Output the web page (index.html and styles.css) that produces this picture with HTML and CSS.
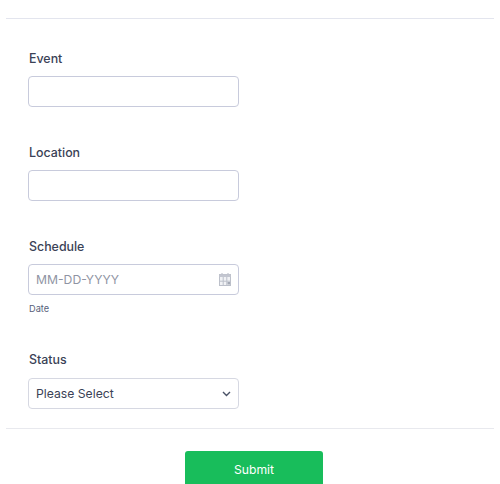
FILE: index.html
```html
<!DOCTYPE html>
<html lang="en">
  <head>
    <meta charset="UTF-8" />
    <title>Form</title>
    <link rel="stylesheet" href="styles.css">
  </head>
  <body>
    <form class="form">
      <ul class="form-list">
        <li class="field">
          <label class="field-label">Event</label>
          <div class="text-input"></div>
        </li>
        <li class="field">
          <label class="field-label">Location</label>
          <div class="text-input"></div>
        </li>
        <li class="field field-date">
          <label class="field-label">Schedule</label>
          <div class="text-input date-input">
            <span class="placeholder">MM-DD-YYYY</span>
            <svg class="calendar-icon" width="12" height="13" viewBox="0 0 12 13">
              <path d="M3 0v2M9 0v2" stroke="#b4b8c3" stroke-width="1" fill="none" />
              <rect x="0.5" y="1.5" width="11" height="11" fill="#f1f2f5" stroke="#bcc0ca" stroke-width="1" />
              <rect x="0.5" y="1.5" width="11" height="2.5" fill="#c3c6d0" />
              <path d="M0.5 8.2h11M4.2 4v8.5M7.8 4v8.5" stroke="#bcc0ca" stroke-width="1" fill="none" />
              <rect x="8.5" y="9" width="2.5" height="2.5" fill="#a4a9b5" />
            </svg>
          </div>
          <span class="sublabel">Date</span>
        </li>
        <li class="field field-status">
          <label class="field-label">Status</label>
          <div class="text-input select-input">
            <span>Please Select</span>
            <svg class="chevron-icon" width="9" height="6" viewBox="0 0 9 6">
              <path d="M1 1l3.5 3.5L8 1" stroke="#4a5266" stroke-width="1.4" fill="none" />
            </svg>
          </div>
        </li>
      </ul>
      <div class="form-actions">
        <button class="submit-btn" type="button">Submit</button>
      </div>
    </form>
  </body>
</html>
```

FILE: styles.css
```css
* {
  margin: 0;
  padding: 0;
  box-sizing: border-box;
}
html,
body {
  height: 484px;
  overflow: hidden;
}
body {
  font-family: Inter, "Liberation Sans", sans-serif;
  background-color: #fff;
  color: #2c3345;
}
.form {
  margin: 0 6px;
  padding-top: 18px;
}
.form-list {
  list-style: none;
  border-top: 1px solid #e3e5ee;
  border-bottom: 1px solid #e8e9ee;
  padding: 31px 22px 19px;
  display: flex;
  flex-direction: column;
  gap: 37px;
}
.field-label {
  display: block;
  font-size: 12.4px;
  line-height: 16px;
  font-weight: 500;
  color: #3a4256;
  padding-top: 1px;
  margin-bottom: 9px;
  padding-left: 1px;
  height: 17px;
}
.text-input {
  width: 211px;
  height: 31px;
  border: 1px solid #c8cbdc;
  border-radius: 4px;
  background: #fff;
  display: flex;
  align-items: center;
  justify-content: space-between;
  padding: 0 7px;
  font-size: 12.2px;
  color: #3a4256;
}
.date-input {
  padding-right: 7px;
}
.placeholder {
  color: #8f94a3;
}
.field-date {
  margin-bottom: -2px;
}
.field-status .field-label {
  margin-bottom: 10px;
}
.sublabel {
  display: block;
  margin-top: 7px;
  padding-left: 1px;
  font-size: 9.2px;
  line-height: 14px;
  color: #57607a;
}
.select-input {
  border-color: #d6d8e2;
  padding-right: 7px;
}
.form-actions {
  display: flex;
  justify-content: center;
  padding-top: 22px;
  padding-left: 8px;
}
.submit-btn {
  width: 138px;
  height: 40px;
  border: none;
  border-radius: 3px;
  background: #18bd5b;
  color: #fff;
  font-family: inherit;
  font-size: 12.2px;
  font-weight: 400;
  padding-bottom: 4px;
}
```
